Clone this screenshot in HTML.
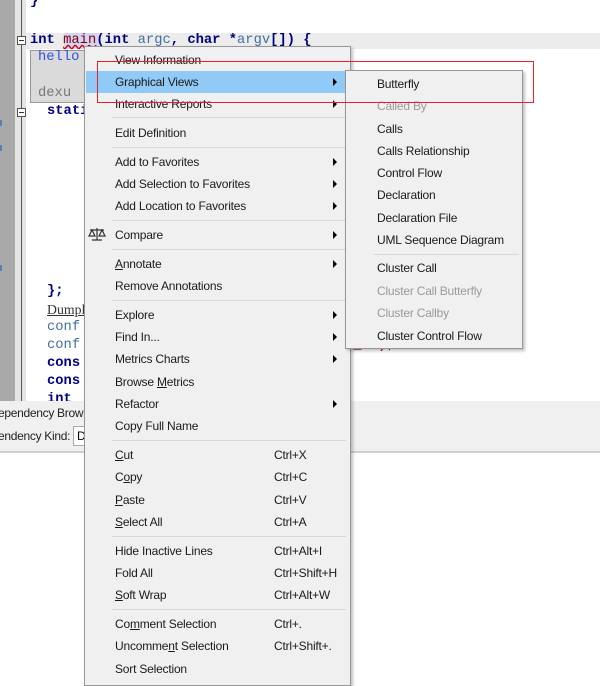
<!DOCTYPE html>
<html><head><style>
*{margin:0;padding:0;box-sizing:border-box}
body{width:600px;height:683px;overflow:hidden;background:#fff;position:relative;font-family:"Liberation Sans",Arial,sans-serif;font-size:12px;color:#000}
.a{position:absolute}
.code{position:absolute;font-family:"Liberation Mono",monospace;font-size:13.8px;white-space:pre;font-weight:bold}
.mi{position:absolute;left:115px;height:22px;line-height:22px;white-space:nowrap;font-size:12px;color:#1a1a1a;letter-spacing:-0.2px}
.sc{position:absolute;left:274px;height:22px;line-height:22px;font-size:12px;color:#1a1a1a;letter-spacing:-0.2px}
.ar{position:absolute;left:333px;width:0;height:0;border-top:4px solid transparent;border-bottom:4px solid transparent;border-left:4px solid #000}
.sep{position:absolute;left:112px;width:234px;height:1px;background:#d7d7d7}
.si{position:absolute;left:377px;height:22px;line-height:22px;font-size:12px;color:#1a1a1a;white-space:nowrap;letter-spacing:-0.2px}
.dis{color:#9a9a9a}
u{text-decoration:underline}
</style></head><body>
<div class="a" style="left:0;top:0;width:15px;height:401px;background:#a9a9a9"></div>
<div class="a" style="left:0;top:120px;width:2px;height:6px;background:#5a7fb0"></div>
<div class="a" style="left:0;top:145px;width:2px;height:6px;background:#5a7fb0"></div>
<div class="a" style="left:0;top:265px;width:2px;height:6px;background:#5a7fb0"></div>
<div class="a" style="left:15px;top:0;width:11px;height:401px;background:#e4e4e4"></div>
<div class="a" style="left:21px;top:0;width:1px;height:401px;background:#555"></div>
<div class="a" style="left:17px;top:36px;width:9px;height:9px;border:1px solid #555;background:#fff"></div>
<div class="a" style="left:19px;top:40px;width:5px;height:1px;background:#333"></div>
<div class="a" style="left:17px;top:108px;width:9px;height:9px;border:1px solid #555;background:#fff"></div>
<div class="a" style="left:19px;top:112px;width:5px;height:1px;background:#333"></div>
<div class="a" style="left:26px;top:33px;width:574px;height:16px;background:#ececec"></div>
<div class="a" style="left:64px;top:33px;width:35px;height:16px;background:#d4d4f8"></div>
<div class="code" style="left:30px;top:-6px;color:#000080">}</div>
<div class="code" style="left:30px;top:33px;color:#000080">int <span style="color:#800000;font-weight:normal;text-decoration:underline wavy #c00">main</span>(int <span style="color:#4070a0;font-weight:normal">argc</span>, char *<span style="color:#4070a0;font-weight:normal">argv</span>[]) {</div>
<div class="a" style="left:30px;top:50px;width:56px;height:53px;background:#dadada;border:1px solid #999"></div>
<div class="code" style="left:38px;top:50px;color:#3050e0;font-weight:normal">hello</div>
<div class="code" style="left:38px;top:86px;color:#777;font-weight:normal">dexu</div>
<div class="code" style="left:47px;top:104px;color:#000080">stati</div>
<div class="code" style="left:47px;top:284px;color:#000080">};</div>
<div class="code" style="left:47px;top:302px;color:#333;font-family:'Liberation Serif',serif;font-weight:normal;text-decoration:underline">Dumpl</div>
<div class="code" style="left:47px;top:320px;color:#4070a0;font-weight:normal">conf</div>
<div class="code" style="left:47px;top:338px;color:#4070a0;font-weight:normal">conf</div>
<div class="code" style="left:47px;top:356px;color:#000080">cons</div>
<div class="code" style="left:47px;top:374px;color:#000080">cons</div>
<div class="code" style="left:47px;top:392px;color:#000080">int</div>
<div class="code" style="left:345px;top:338px;color:#800000;font-weight:normal">e_id);</div>
<div class="a" style="left:0;top:401px;width:600px;height:52px;background:#f0f0f0;border-bottom:2px solid #d0d0d0"></div>
<div class="a" style="left:-2px;top:406px;font-size:12px;color:#222;letter-spacing:-0.3px">ependency Brow</div>
<div class="a" style="left:-2px;top:429px;font-size:12px;color:#222;letter-spacing:-0.3px">endency Kind:</div>
<div class="a" style="left:73px;top:426px;width:20px;height:20px;border:1px solid #aaa;background:#fff;font-size:12px;padding:2px 3px">D</div>
<div class="a" style="left:84px;top:46px;width:267px;height:640px;background:#f0f0f0;border:1px solid #979797;box-shadow:2px 2px 3px rgba(0,0,0,.25)"></div>
<div class="a" style="left:86px;top:71px;width:259px;height:22px;background:#91c9f7"></div>
<div class="mi" style="top:49px">View Information</div>
<div class="mi" style="top:71px">Graphical Views</div><div class="ar" style="top:78px"></div>
<div class="mi" style="top:93px">Interactive Reports</div><div class="ar" style="top:100px"></div>
<div class="sep" style="top:117px"></div>
<div class="mi" style="top:122px">Edit Definition</div>
<div class="sep" style="top:147px"></div>
<div class="mi" style="top:151px">Add to Favorites</div><div class="ar" style="top:158px"></div>
<div class="mi" style="top:173px">Add Selection to Favorites</div><div class="ar" style="top:180px"></div>
<div class="mi" style="top:195px">Add Location to Favorites</div><div class="ar" style="top:202px"></div>
<div class="sep" style="top:220px"></div>
<svg class="a" style="left:88px;top:227px" width="18" height="14" viewBox="0 0 18 14"><g stroke="#333" fill="none" stroke-width="1.2"><path d="M9 1V13M4 13H14M2 3H16M4 3L1 9H7Z M14 3L11 9H17Z"/></g></svg>
<div class="mi" style="top:224px">Compare</div><div class="ar" style="top:231px"></div>
<div class="sep" style="top:249px"></div>
<div class="mi" style="top:253px"><u>A</u>nnotate</div><div class="ar" style="top:260px"></div>
<div class="mi" style="top:275px">Remove Annotations</div>
<div class="sep" style="top:300px"></div>
<div class="mi" style="top:304px">Explore</div><div class="ar" style="top:311px"></div>
<div class="mi" style="top:326px">Find In...</div><div class="ar" style="top:333px"></div>
<div class="mi" style="top:348px">Metrics Charts</div><div class="ar" style="top:355px"></div>
<div class="mi" style="top:371px">Browse <u>M</u>etrics</div>
<div class="mi" style="top:393px">Refactor</div><div class="ar" style="top:400px"></div>
<div class="mi" style="top:415px">Copy Full Name</div>
<div class="sep" style="top:440px"></div>
<div class="mi" style="top:444px"><u>C</u>ut</div><div class="sc" style="top:444px">Ctrl+X</div>
<div class="mi" style="top:466px">C<u>o</u>py</div><div class="sc" style="top:466px">Ctrl+C</div>
<div class="mi" style="top:489px"><u>P</u>aste</div><div class="sc" style="top:489px">Ctrl+V</div>
<div class="mi" style="top:511px"><u>S</u>elect All</div><div class="sc" style="top:511px">Ctrl+A</div>
<div class="sep" style="top:536px"></div>
<div class="mi" style="top:540px">Hide Inactive Lines</div><div class="sc" style="top:540px">Ctrl+Alt+I</div>
<div class="mi" style="top:562px">Fold All</div><div class="sc" style="top:562px">Ctrl+Shift+H</div>
<div class="mi" style="top:584px"><u>S</u>oft Wrap</div><div class="sc" style="top:584px">Ctrl+Alt+W</div>
<div class="sep" style="top:609px"></div>
<div class="mi" style="top:613px">Co<u>m</u>ment Selection</div><div class="sc" style="top:613px">Ctrl+.</div>
<div class="mi" style="top:635px">Uncomme<u>n</u>t Selection</div><div class="sc" style="top:635px">Ctrl+Shift+.</div>
<div class="mi" style="top:658px">Sort Selection</div>
<div class="a" style="left:345px;top:70px;width:178px;height:279px;background:#f0f0f0;border:1px solid #979797;box-shadow:2px 2px 3px rgba(0,0,0,.25)"></div>
<div class="si" style="top:73px">Butterfly</div>
<div class="si dis" style="top:95px">Called By</div>
<div class="si" style="top:118px">Calls</div>
<div class="si" style="top:140px">Calls Relationship</div>
<div class="si" style="top:162px">Control Flow</div>
<div class="si" style="top:184px">Declaration</div>
<div class="si" style="top:207px">Declaration File</div>
<div class="si" style="top:229px">UML Sequence Diagram</div>
<div class="a" style="left:374px;top:254px;width:145px;height:1px;background:#d7d7d7"></div>
<div class="si" style="top:257px">Cluster Call</div>
<div class="si dis" style="top:280px">Cluster Call Butterfly</div>
<div class="si dis" style="top:302px">Cluster Callby</div>
<div class="si" style="top:325px">Cluster Control Flow</div>
<div class="a" style="left:97px;top:61px;width:437px;height:42px;border:1.5px solid #e8202a"></div>
</body></html>
